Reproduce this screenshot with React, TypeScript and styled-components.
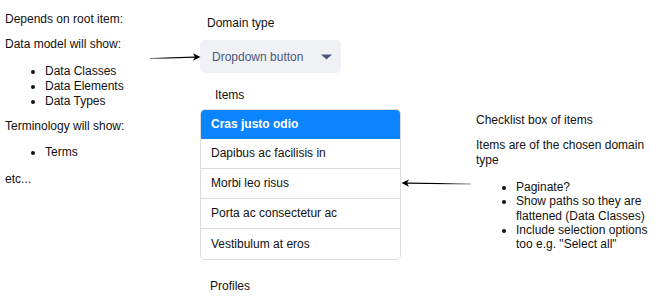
import React from "react";
import styled, { createGlobalStyle } from "styled-components";

const GlobalStyle = createGlobalStyle`
  html, body {
    margin: 0;
    padding: 0;
    background: #ffffff;
  }
  body {
    font-family: "Liberation Sans", Arial, sans-serif;
    font-size: 12px;
    line-height: 14.4px;
    color: #111111;
  }
`;

const Canvas = styled.div`
  position: relative;
  width: 661px;
  height: 301px;
  overflow: hidden;
  display: flex;
  align-items: flex-start;
`;

const NoteColumn = styled.div<{ $width: number; $top: number; $left: number }>`
  width: ${(p) => p.$width}px;
  margin-left: ${(p) => p.$left}px;
  padding-top: ${(p) => p.$top}px;
  flex-shrink: 0;
`;

const Para = styled.p`
  margin: 0 0 11px;
`;

const Bullets = styled.ul<{ $line?: number; $mt?: number; $mb?: number }>`
  margin: ${(p) => p.$mt ?? 12.5}px 0 ${(p) => p.$mb ?? 12.5}px;
  padding-left: 40px;
  list-style: disc;
  line-height: ${(p) => p.$line ?? 14.4}px;
`;

const MockColumn = styled.div`
  width: 201px;
  flex-shrink: 0;
  display: flex;
  flex-direction: column;
  align-items: flex-start;
`;

const FieldLabel = styled.div<{ $left: number; $top: number }>`
  margin-left: ${(p) => p.$left}px;
  margin-top: ${(p) => p.$top}px;
`;

const DropdownButton = styled.button`
  margin-top: 10px;
  width: 141px;
  height: 33px;
  box-sizing: border-box;
  padding: 0 9px 0 12px;
  display: flex;
  align-items: center;
  justify-content: space-between;
  border: none;
  border-radius: 5px;
  background: #f0f1f4;
  color: #4b5877;
  font-family: "Liberation Sans", Arial, sans-serif;
  font-size: 12px;
`;

const Caret = styled.svg`
  width: 11px;
  height: 6px;
  display: block;
`;

const ListGroup = styled.div`
  margin-top: 6px;
  width: 201px;
  box-sizing: border-box;
  border: 1px solid #dcdcdc;
  border-radius: 5px;
  overflow: hidden;
`;

const ListItem = styled.div<{ $active?: boolean }>`
  height: 30px;
  box-sizing: border-box;
  display: flex;
  align-items: center;
  padding-left: 10px;
  background: ${(p) => (p.$active ? "#0a84ff" : "#ffffff")};
  color: ${(p) => (p.$active ? "#ffffff" : "#111111")};
  font-weight: ${(p) => (p.$active ? 700 : 400)};
  border-bottom: 1px solid #dcdcdc;
  &:last-child {
    border-bottom: none;
  }
  &:first-child {
    height: 29px;
    border-bottom: none;
  }
`;

const Connectors = styled.svg`
  position: absolute;
  left: 0;
  top: 0;
  width: 661px;
  height: 301px;
  pointer-events: none;
`;

const items = [
  "Cras justo odio",
  "Dapibus ac facilisis in",
  "Morbi leo risus",
  "Porta ac consectetur ac",
  "Vestibulum at eros",
];

export default function App() {
  return (
    <>
      <GlobalStyle />
      <Canvas>
        <NoteColumn $width={195} $left={5} $top={12}>
          <Para>Depends on root item:</Para>
          <Para>Data model will show:</Para>
          <Bullets $line={14.7} $mb={10.5}>
            <li>Data Classes</li>
            <li>Data Elements</li>
            <li>Data Types</li>
          </Bullets>
          <Para>Terminology will show:</Para>
          <Bullets $mt={11.5}>
            <li>Terms</li>
          </Bullets>
          <Para>etc...</Para>
        </NoteColumn>

        <MockColumn>
          <FieldLabel $left={7} $top={16}>Domain type</FieldLabel>
          <DropdownButton>
            <span>Dropdown button</span>
            <Caret viewBox="0 0 11 6">
              <path d="M0 0.5 L11 0.5 L5.5 5.5 Z" fill="#4b5877" />
            </Caret>
          </DropdownButton>
          <FieldLabel $left={15} $top={15}>Items</FieldLabel>
          <ListGroup>
            {items.map((t, i) => (
              <ListItem key={t} $active={i === 0}>
                {t}
              </ListItem>
            ))}
          </ListGroup>
          <FieldLabel $left={10} $top={19}>Profiles</FieldLabel>
        </MockColumn>

        <NoteColumn $width={181} $left={75} $top={113}>
          <Para>Checklist box of items</Para>
          <Para>Items are of the chosen domain type</Para>
          <Bullets>
            <li>Paginate?</li>
            <li>Show paths so they are flattened (Data Classes)</li>
            <li>Include selection options too e.g. "Select all"</li>
          </Bullets>
        </NoteColumn>

        <Connectors viewBox="0 0 661 301">
          <defs>
            <linearGradient id="fadeL" x1="0" x2="1" y1="0" y2="0">
              <stop offset="0" stopColor="#888888" />
              <stop offset="0.4" stopColor="#000000" />
            </linearGradient>
            <linearGradient id="fadeR" x1="1" x2="0" y1="0" y2="0">
              <stop offset="0" stopColor="#999999" />
              <stop offset="0.5" stopColor="#000000" />
            </linearGradient>
          </defs>
          <path d="M150 58.5 L195 57.2" stroke="url(#fadeL)" strokeWidth="1.2" fill="none" />
          <path d="M200.5 57 L193 53.3 L195 57.1 L193 60.8 Z" fill="#000000" />
          <path d="M471 184 L407 183.2" stroke="url(#fadeR)" strokeWidth="1.2" fill="none" />
          <path d="M401.5 183 L409 179.4 L407 183.1 L409 186.8 Z" fill="#000000" />
        </Connectors>
      </Canvas>
    </>
  );
}
